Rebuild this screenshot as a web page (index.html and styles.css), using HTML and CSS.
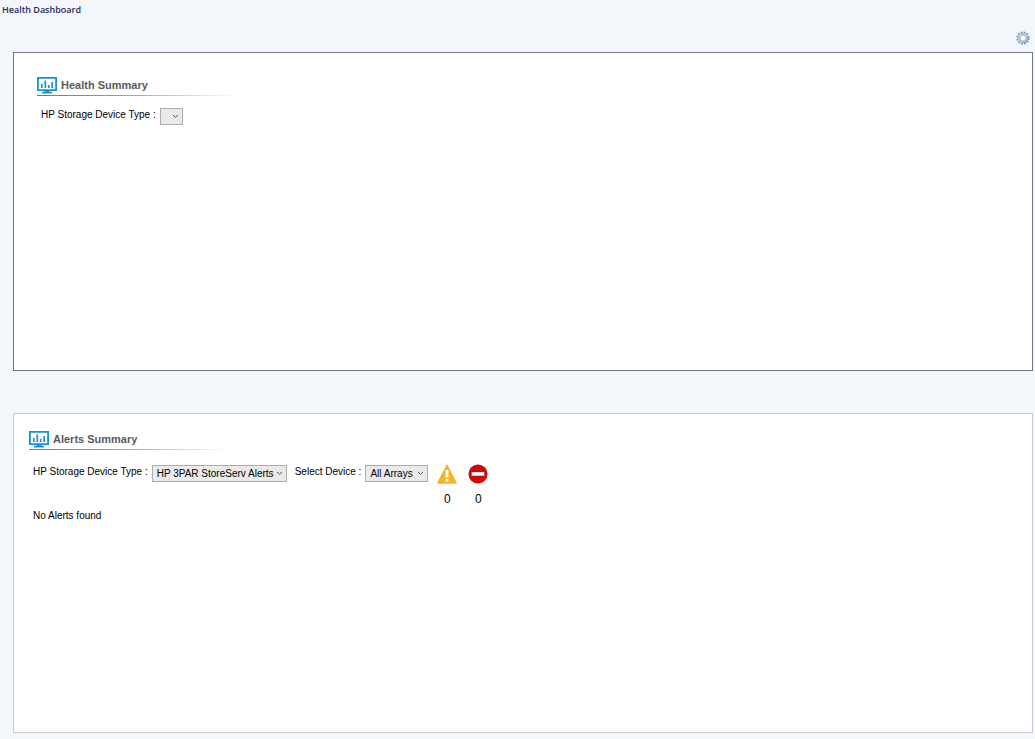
FILE: index.html
```html
<!DOCTYPE html>
<html lang="en">
<head>
    <meta charset="UTF-8">
    <meta name="viewport" content="width=device-width, initial-scale=1.0">
    <title>Health Dashboard</title>
    <link rel="stylesheet" href="styles.css">
</head>
<body>

    <!-- shared monitor icon -->
    <svg class="sprite" aria-hidden="true">
        <symbol id="monitor" viewBox="0 0 20 17">
            <path d="M.9 .9h18.2v12.2H.9z" fill="#fff" stroke="#1493d6" stroke-width="1.8"/>
            <path d="M4.8 11V7M8.3 11V3.6M11.7 11V8M15.2 11V5" stroke="#1493d6" stroke-width="1.7"/>
            <path d="M7.5 13h5v1.7h2.5V16.6H5V14.7h2.5z" fill="#1493d6"/>
        </symbol>
        <symbol id="chevron" viewBox="0 0 7 5">
            <path d="M1 1l2.5 2.3L6 1" fill="none" stroke="#555" stroke-width="1"/>
        </symbol>
    </svg>

    <header>
        <h1>Health Dashboard</h1>
        <button type="button" class="settings" aria-label="Settings">
            <svg viewBox="0 0 14 14">
                <circle cx="7" cy="7" r="5.8" fill="none" stroke="#6f8fae" stroke-width="1.6" stroke-dasharray="1.8 1.237"/>
                <circle cx="7" cy="7" r="4" fill="none" stroke="#a9c4dd" stroke-width="2.6"/>
                <path d="M11.8 7A4.8 4.8 0 0 1 7 11.8" fill="none" stroke="#7f9fbf" stroke-width="1"/>
                <circle cx="7" cy="7" r="2.7" fill="#fff" stroke="#8aa8c4" stroke-width="0.5"/>
            </svg>
        </button>
    </header>

    <main>
        <section class="panel health">
            <h2><svg><use href="#monitor"/></svg>Health Summary</h2>
            <div class="filters">
                <label for="healthType">HP Storage Device Type :</label>
                <span class="select">
                    <select id="healthType" class="empty"></select>
                    <svg><use href="#chevron"/></svg>
                </span>
            </div>
        </section>

        <section class="panel alerts">
            <h2><svg><use href="#monitor"/></svg>Alerts Summary</h2>
            <div class="filters">
                <label for="alertType">HP Storage Device Type :</label>
                <span class="select">
                    <select id="alertType" class="type">
                        <option>HP 3PAR StoreServ Alerts</option>
                    </select>
                    <svg><use href="#chevron"/></svg>
                </span>
                <label for="device">Select Device :</label>
                <span class="select">
                    <select id="device" class="device">
                        <option>All Arrays</option>
                    </select>
                    <svg><use href="#chevron"/></svg>
                </span>
                <div class="counts">
                    <div class="count">
                        <svg viewBox="0 0 20 20" role="img" aria-label="Warnings">
                            <path d="M10 1.2L19.2 19H.8z" fill="#f7b32b" stroke="#f7b32b" stroke-width="1.4" stroke-linejoin="round"/>
                            <path d="M8.6 6h2.8v7.5H8.6zM8.6 15h2.8v2.7H8.6z" fill="#fff"/>
                        </svg>
                        <span>0</span>
                    </div>
                    <div class="count">
                        <svg viewBox="0 0 20 20" role="img" aria-label="Critical">
                            <circle cx="10" cy="10" r="9.6" fill="#cc0a0a"/>
                            <path d="M3.7 8.1h12.6v3.6H3.7z" fill="#fff"/>
                        </svg>
                        <span>0</span>
                    </div>
                </div>
            </div>
            <p>No Alerts found</p>
        </section>
    </main>

</body>
</html>
```
FILE: styles.css
```css
* {
    box-sizing: border-box;
}

body {
    margin: 0;
    background-color: #f3f7fc;
    font-family: "Liberation Sans", Arial, sans-serif;
    font-size: 10px;
    line-height: 12px;
    color: #000;
}

.sprite {
    display: none;
}

/* HEADER */
header {
    display: flex;
    flex-direction: column;
    padding: 3px 5px 7px 2px;
}

h1 {
    margin: 0 0 14px;
    font-family: "Open Sans", "Noto Sans", sans-serif;
    font-size: 9px;
    font-weight: 600;
    line-height: 14px;
    color: #1f2a5c;
}

.settings {
    align-self: flex-end;
    width: 14px;
    height: 14px;
    padding: 0;
    border: none;
    background: none;
    cursor: pointer;
}

.settings svg {
    display: block;
    width: 14px;
    height: 14px;
}

/* PANELS */
main {
    display: flex;
    flex-direction: column;
    gap: 42px;
    padding: 0 2px 6px 13px;
}

.panel {
    min-height: 320px;
    background-color: #fff;
    border: 1px solid #c9cbcf;
}

.health {
    padding: 23px;
    min-height: 319px;
    border-color: #72757f;
}

.alerts {
    padding: 16px 15px;
}

h2 {
    display: flex;
    align-items: center;
    gap: 4px;
    width: 200px;
    height: 20px;
    margin: 0 0 11px;
    padding-bottom: 2px;
    background: linear-gradient(to right, #777, #999 40%, #fff) bottom / 100% 1px no-repeat;
    font-size: 11px;
    color: #5a5a5a;
}

h2 svg {
    width: 20px;
    height: 17px;
}

.filters {
    display: flex;
    align-items: flex-start;
    gap: 4px;
    padding-left: 4px;
}

.alerts .filters {
    padding-top: 3px;
}

label {
    padding-top: 2px;
}

/* SELECTS */
.select {
    position: relative;
    display: flex;
    margin: 1px 4px 0 0;
}

.select select {
    appearance: none;
    height: 17px;
    margin: 0;
    padding: 0 4px;
    border: 1px solid #adadad;
    border-radius: 0;
    background-color: #eaeaea;
    font: inherit;
    color: #000;
}

.select svg {
    position: absolute;
    right: 4px;
    top: 6px;
    width: 7px;
    height: 5px;
    pointer-events: none;
}

.select .empty {
    width: 23px;
}

.select .type {
    width: 135px;
}

.select .device {
    width: 63px;
}

/* ALERT COUNTS */
.counts {
    display: flex;
    gap: 11px;
    padding-left: 1px;
}

.count {
    display: flex;
    flex-direction: column;
    align-items: center;
    gap: 9px;
    font-size: 12px;
}

.count svg {
    width: 20px;
    height: 20px;
}

p {
    margin: 5px 0 0 4px;
}
```
